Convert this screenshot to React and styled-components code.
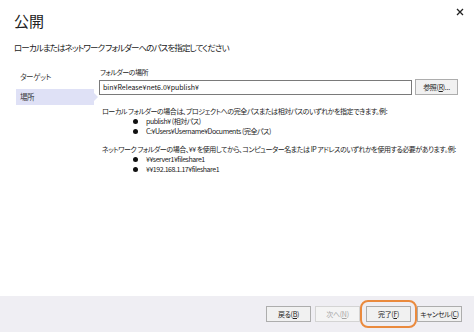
import styled, { createGlobalStyle } from 'styled-components'

const GlobalStyle = createGlobalStyle`
    html, body {
        margin: 0;
        padding: 0;
        background: #ffffff;
    }
    body {
        font-family: "Noto Sans CJK JP", "Noto Sans", sans-serif;
        font-feature-settings: "palt";
        color: #1b1b1b;
    }
`

const Key = ({ children }) => <u>{children}</u>

const App = () => {
    return (
        <>
            <GlobalStyle />
            <Window>
                <Header>
                    <Title>公開</Title>
                    <CloseButton aria-label="閉じる">
                        <svg width="8" height="8" viewBox="0 0 8 8">
                            <path d="M1 1 L7 7 M7 1 L1 7" stroke="#222" strokeWidth="1.3" />
                        </svg>
                    </CloseButton>
                </Header>
                <Subtitle>ローカルまたはネットワーク フォルダーへのパスを指定してください</Subtitle>

                <Main>
                    <Nav>
                        <NavItem>ターゲット</NavItem>
                        <NavItem $active>場所</NavItem>
                    </Nav>

                    <Content>
                        <Label>フォルダーの場所</Label>
                        <PathRow>
                            <PathInput defaultValue="bin¥Release¥net6.0¥publish¥" />
                            <Button $small>参照(<Key>R</Key>)...</Button>
                        </PathRow>

                        <Help>
                            <p>ローカル フォルダーの場合は、プロジェクトへの完全パスまたは相対パスのいずれかを指定できます。例:</p>
                            <ul>
                                <li>publish¥ (相対パス)</li>
                                <li>C:¥Users¥Username¥Documents (完全パス)</li>
                            </ul>
                            <p>ネットワーク フォルダーの場合、¥¥ を使用してから、コンピューター名または IP アドレスのいずれかを使用する必要があります。例:</p>
                            <ul>
                                <li>¥¥server1¥fileshare1</li>
                                <li>¥¥192.168.1.17¥fileshare1</li>
                            </ul>
                        </Help>
                    </Content>
                </Main>

                <Footer>
                    <Button>戻る(<Key>B</Key>)</Button>
                    <Button disabled>次へ(<Key>N</Key>)</Button>
                    <Highlight>
                        <Button>完了(<Key>F</Key>)</Button>
                    </Highlight>
                    <Button>キャンセル(<Key>C</Key>)</Button>
                </Footer>
            </Window>
        </>
    )
}

const Window = styled.div`
    width: 474px;
    height: 332px;
    display: flex;
    flex-direction: column;
    background: #ffffff;
    overflow: hidden;
`

const Header = styled.div`
    display: flex;
    justify-content: space-between;
    align-items: flex-start;
    padding: 10px 9px 0 14px;
`

const Title = styled.h1`
    margin: 0;
    font-size: 15px;
    line-height: 22px;
    font-weight: 400;
    color: #222;
`

const CloseButton = styled.button`
    border: none;
    background: transparent;
    padding: 0;
    width: 10px;
    height: 10px;
    margin-top: -3px;
    display: flex;
    align-items: center;
    justify-content: center;
`

const Subtitle = styled.p`
    margin: 9px 0 0 14px;
    font-size: 8.5px;
    letter-spacing: -0.9px;
    line-height: 12px;
    color: #1b1b1b;
`

const Main = styled.div`
    flex: 1;
    display: flex;
    padding-top: 13px;
`

const Nav = styled.div`
    flex-shrink: 0;
    width: 78px;
    margin-left: 16px;
    padding-top: 3px;
    display: flex;
    flex-direction: column;
    gap: 4px;
`

const NavItem = styled.div`
    position: relative;
    height: 16px;
    line-height: 16px;
    padding-left: 4px;
    font-size: 7.5px;
    letter-spacing: -0.4px;
    white-space: nowrap;
    color: #333;
    background: ${p => (p.$active ? '#dfe1f6' : 'transparent')};

    &::after {
        content: '';
        display: ${p => (p.$active ? 'block' : 'none')};
        position: absolute;
        right: -4px;
        top: 4px;
        border-left: 4px solid #dfe1f6;
        border-top: 4px solid transparent;
        border-bottom: 4px solid transparent;
    }
`

const Content = styled.div`
    flex: 1;
    min-width: 0;
    padding-left: 5px;
    padding-right: 16px;
`

const Label = styled.div`
    font-size: 7px;
    letter-spacing: -0.5px;
    line-height: 12px;
    margin-left: 1px;
    color: #222;
`

const PathRow = styled.div`
    display: flex;
    align-items: center;
    gap: 3px;
    margin-top: 1px;
`

const PathInput = styled.input`
    flex: 1;
    min-width: 0;
    height: 15px;
    box-sizing: border-box;
    border: 1px solid #7a7a7a;
    padding: 0 3px;
    font-family: inherit;
    font-feature-settings: "palt";
    font-size: 7px;
    color: #111;
    outline: none;
`

const Button = styled.button`
    box-sizing: border-box;
    flex-shrink: 0;
    width: ${p => (p.$small ? '43px' : '45px')};
    height: 16px;
    padding: 0;
    border: 1px solid ${p => (p.disabled ? '#d4d4d4' : '#adadad')};
    background: ${p => (p.disabled ? '#f4f4f4' : '#f1f1f1')};
    font-family: inherit;
    font-feature-settings: "palt";
    font-size: 7px;
    letter-spacing: -0.3px;
    line-height: 14px;
    white-space: nowrap;
    color: ${p => (p.disabled ? '#a5a5a5' : '#222')};

    u {
        text-underline-offset: 1px;
    }
`

const Help = styled.div`
    margin-top: 11px;
    margin-left: 3px;
    font-size: 7px;
    letter-spacing: -0.45px;
    line-height: 10px;
    color: #222;

    p {
        margin: 0;
        white-space: nowrap;
    }

    ul {
        margin: 0 0 8px 0;
        padding-left: 31px;
        list-style: none;
    }

    li {
        display: flex;
        align-items: center;
        height: 10px;
    }

    li::before {
        content: '';
        flex-shrink: 0;
        width: 5px;
        height: 5px;
        margin-right: 8px;
        border-radius: 50%;
        background: #111;
    }
`

const Footer = styled.div`
    height: 36px;
    flex-shrink: 0;
    display: flex;
    align-items: center;
    justify-content: flex-end;
    gap: 4px;
    padding-right: 12px;
    background: #efeef3;
`

const Highlight = styled.span`
    position: relative;
    display: inline-flex;
    margin: 0 2px;

    &::after {
        content: '';
        position: absolute;
        inset: -6px -6px;
        border: 2px solid #ea8a3e;
        border-radius: 8px;
        pointer-events: none;
    }
`

export default App
